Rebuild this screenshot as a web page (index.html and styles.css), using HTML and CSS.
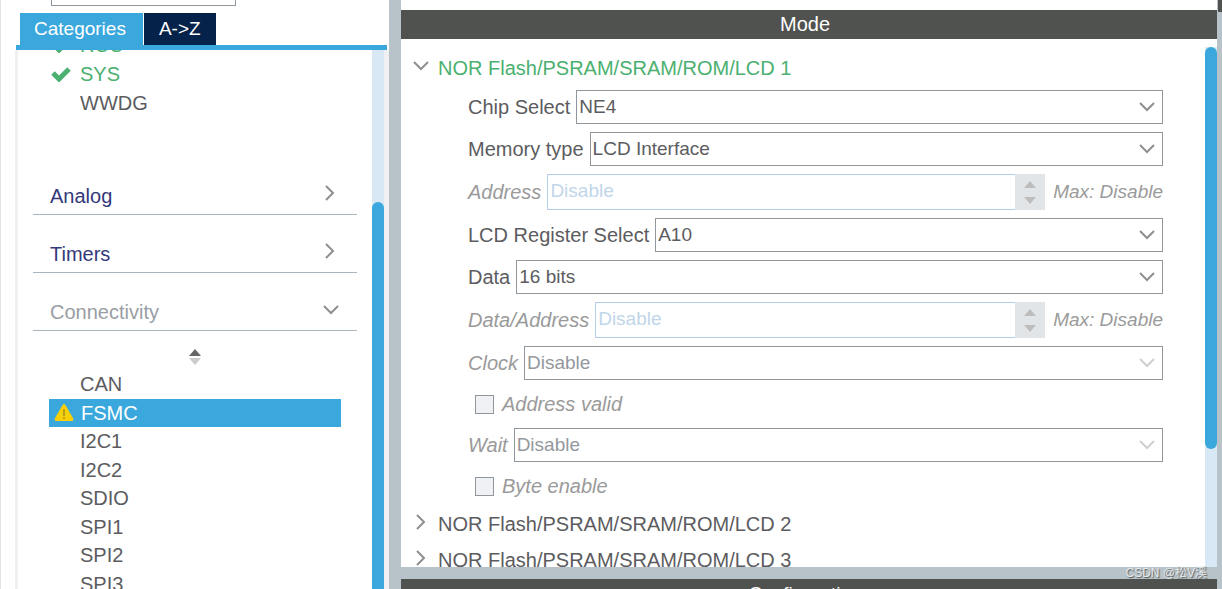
FILE: index.html
```html
<!DOCTYPE html>
<html lang="en">
<head>
<meta charset="utf-8">
<title>FSMC Mode and Configuration</title>
<link rel="stylesheet" href="styles.css">
</head>
<body>
<svg class="defs" aria-hidden="true">
  <symbol id="down" viewBox="0 0 16 10"><path d="M1 1 L8 8 L15 1" fill="none" stroke="currentColor" stroke-width="2"/></symbol>
  <symbol id="right" viewBox="0 0 10 16"><path d="M1 1 L8 8 L1 15" fill="none" stroke="currentColor" stroke-width="2"/></symbol>
  <symbol id="check" viewBox="0 0 20 16"><path d="M2 7 L8 13 L18 3" fill="none" stroke="currentColor" stroke-width="5"/></symbol>
  <symbol id="up-tri" viewBox="0 0 12 7"><path d="M6 0 L12 7 H0 Z" fill="currentColor"/></symbol>
  <symbol id="down-tri" viewBox="0 0 12 7"><path d="M6 7 L12 0 H0 Z" fill="currentColor"/></symbol>
</svg>
<div class="app">
  <aside class="sidebar">
    <input class="search" type="text" aria-label="Search">
    <div class="tabs" role="tablist">
      <button class="tab active" role="tab">Categories</button>
      <button class="tab" role="tab">A-&gt;Z</button>
    </div>
    <div class="tree">
      <div class="tree-content">
        <ul class="items system">
          <li class="item ok"><svg class="mark"><use href="#check"/></svg>RCC</li>
          <li class="item ok"><svg class="mark"><use href="#check"/></svg>SYS</li>
          <li class="item">WWDG</li>
        </ul>
        <button class="group">Analog<svg class="chev right"><use href="#right"/></svg></button>
        <button class="group">Timers<svg class="chev right"><use href="#right"/></svg></button>
        <button class="group open">Connectivity<svg class="chev"><use href="#down"/></svg></button>
        <button class="sort" aria-label="Sort"><svg class="tri dark"><use href="#up-tri"/></svg><svg class="tri"><use href="#down-tri"/></svg></button>
        <ul class="items connectivity">
          <li class="item">CAN</li>
          <li class="item selected"><svg class="warn" viewBox="0 0 20 17"><path d="M10 0 Q11 0 12 2 L19 14 Q20 17 18 17 H2 Q0 17 1 14 L8 2 Q9 0 10 0 Z" fill="#f8d007"/><path d="M10 5 V12 M10 13 V15" stroke="#a49222" stroke-width="1.5"/></svg>FSMC</li>
          <li class="item">I2C1</li>
          <li class="item">I2C2</li>
          <li class="item">SDIO</li>
          <li class="item">SPI1</li>
          <li class="item">SPI2</li>
          <li class="item">SPI3</li>
        </ul>
      </div>
      <div class="track"><div class="thumb"></div></div>
    </div>
  </aside>
  <main class="main">
    <h2 class="bar">Mode</h2>
    <section class="panel">
      <div class="panel-content">
        <button class="head on"><svg class="chev"><use href="#down"/></svg>NOR Flash/PSRAM/SRAM/ROM/LCD 1</button>
        <div class="form">
          <div class="row"><label for="cs">Chip Select</label><span class="pick"><select id="cs"><option>NE4</option></select><svg class="chev"><use href="#down"/></svg></span></div>
          <div class="row"><label for="mt">Memory type</label><span class="pick"><select id="mt"><option>LCD Interface</option></select><svg class="chev"><use href="#down"/></svg></span></div>
          <div class="row off"><label for="ad">Address</label><span class="spin"><input id="ad" type="text" value="Disable" disabled><span class="steps"><button disabled aria-label="Increase address"><svg class="tri"><use href="#up-tri"/></svg></button><button disabled aria-label="Decrease address"><svg class="tri"><use href="#down-tri"/></svg></button></span></span><span class="max">Max: Disable</span></div>
          <div class="row"><label for="rs">LCD Register Select</label><span class="pick"><select id="rs"><option>A10</option></select><svg class="chev"><use href="#down"/></svg></span></div>
          <div class="row"><label for="da">Data</label><span class="pick"><select id="da"><option>16 bits</option></select><svg class="chev"><use href="#down"/></svg></span></div>
          <div class="row off"><label for="dd">Data/Address</label><span class="spin"><input id="dd" type="text" value="Disable" disabled><span class="steps"><button disabled aria-label="Increase data/address"><svg class="tri"><use href="#up-tri"/></svg></button><button disabled aria-label="Decrease data/address"><svg class="tri"><use href="#down-tri"/></svg></button></span></span><span class="max">Max: Disable</span></div>
          <div class="row off"><label for="ck">Clock</label><span class="pick"><select id="ck" disabled><option>Disable</option></select><svg class="chev"><use href="#down"/></svg></span></div>
          <div class="row off tick"><input id="av" type="checkbox" disabled><label for="av">Address valid</label></div>
          <div class="row off"><label for="wt">Wait</label><span class="pick"><select id="wt" disabled><option>Disable</option></select><svg class="chev"><use href="#down"/></svg></span></div>
          <div class="row off tick"><input id="be" type="checkbox" disabled><label for="be">Byte enable</label></div>
        </div>
        <button class="head"><svg class="chev right"><use href="#right"/></svg>NOR Flash/PSRAM/SRAM/ROM/LCD 2</button>
        <button class="head"><svg class="chev right"><use href="#right"/></svg>NOR Flash/PSRAM/SRAM/ROM/LCD 3</button>
      </div>
      <div class="track"><div class="thumb"></div></div>
    </section>
    <h2 class="bar config">Configuration</h2>
  </main>
  <div class="edge"></div>
  <div class="watermark">CSDN @松V溪</div>
</div>
</body>
</html>
```

FILE: styles.css
```css
* { box-sizing: border-box; }
body { margin: 0; }
button, input, select { font: inherit; color: inherit; margin: 0; padding: 0; border: 0; border-radius: 0; background: none; }
.defs { display: none; }

.app {
  position: relative;
  display: flex;
  height: 100vh;
  overflow: hidden;
  background: #b8c3c9;
  font-family: "Liberation Sans", Arial, "Noto Sans CJK SC", sans-serif;
  font-size: 20px;
  line-height: 28px;
  color: #5c5c60;
}

.sidebar {
  display: flex;
  flex-direction: column;
  flex: 0 0 389px;
  margin-right: 12px;
  background: #fff;
  border-left: 1px solid #e4e4e4;
}
.search { width: 185px; height: 6px; margin-left: 50px; border: 1px solid #8f969c; border-top: 0; }
.tabs { display: flex; gap: 1px; margin: 7px 2px 0 15px; padding-left: 4px; border-bottom: 5px solid #3aa8dc; font-size: 19px; }
.tab { height: 32px; padding: 0 15px; background: #05234a; color: #fff; }
.tab.active { padding: 0 17px 0 14px; background: #3aa8dc; }
.tree { display: flex; flex: 1; min-height: 0; margin-left: 14px; border-left: 3px solid #f0f0f0; border-right: 5px solid #f0f0f2; overflow: hidden; }
.tree-content { flex: 1; padding: 0 15px; }
.items { display: grid; grid-auto-rows: 1fr; margin: 0 16px; padding: 0; list-style: none; }
.item { display: flex; align-items: center; padding-left: 31px; }
.system { height: 86px; margin-top: -19px; }
.connectivity { height: 228px; }
.ok { color: #4bb070; padding-left: 2px; gap: 9px; }
.mark { width: 20px; height: 16px; }
.selected { gap: 7px; padding-left: 5px; background: #3aa8dc; color: #fff; }
.warn { width: 20px; height: 17px; }
.group {
  display: flex;
  align-items: flex-end;
  justify-content: space-between;
  width: 100%;
  height: 58px;
  padding: 0 18px 4px 17px;
  border-bottom: 1px solid #a9b6bd;
  color: #33397a;
}
.system + .group { margin-top: 40px; }
.group.open { color: #999da5; }
.chev { width: 16px; height: 10px; color: #8f8f8f; flex: none; }
.chev.right { width: 10px; height: 16px; }
.group .chev { margin-bottom: 11px; }
.group .chev.right { margin: 0 4px 9px 0; }
.sort { display: flex; flex-direction: column; align-items: center; gap: 2px; width: 100%; padding: 18px 0 5px; }
.tri { display: block; width: 12px; height: 7px; color: #cbcbcb; }
.tri.dark { color: #666; }

.track { flex: 0 0 12px; background: #d9e8f5; }
.thumb { background: #3aa8dc; border-radius: 6px; }
.tree .thumb { height: 500px; margin-top: 152px; }

.main { flex: 1; display: flex; flex-direction: column; min-width: 0; border-top: 10px solid #fff; }
.bar { flex: none; height: 29px; margin: 0; padding-right: 8px; background: #50524f; color: #fff; font-size: 20px; font-weight: 400; text-align: center; }
.config { height: 10px; margin-top: 12px; font-size: 19px; line-height: 30px; overflow: hidden; }
.panel { flex: 1; display: flex; min-height: 0; background: #fff; overflow: hidden; }
.panel-content { flex: 1; min-width: 0; padding: 11px 42px 0 12px; }
.head { display: flex; align-items: center; gap: 9px; width: 100%; height: 36px; text-align: left; }
.head .chev { margin: 0 0 4px; }
.head .chev.right { margin: 0 3px 4px; }
.head.on { color: #4bb070; }
.form { display: flex; flex-direction: column; gap: 8px; margin: 4px 0 4px 55px; }
.row { display: flex; align-items: center; gap: 6px; }
.row label, .max { flex: none; }
.pick { position: relative; flex: 1; display: flex; }
.pick select { appearance: none; width: 100%; height: 34px; padding-left: 2px; border: 1px solid #8f969c; background: #fff; font-size: 19px; opacity: 1; }
.pick .chev { position: absolute; right: 8px; top: 12px; pointer-events: none; }
.off { color: #9a9a9a; }
.off label, .max { font-style: italic; }
.off .chev { color: #cfcfcf; }
.pick select:disabled { color: #94989d; }
.max { margin-left: 2px; font-size: 19px; }
.spin { flex: 1; display: flex; height: 36px; }
.spin input { flex: 1; min-width: 0; padding: 0 0 3px 2px; border: 1px solid #b4cfe8; border-right: 0; color: #bfd6ea; font-size: 19px; }
.steps { display: flex; flex-direction: column; justify-content: center; align-items: center; gap: 9px; width: 30px; background: #e2e5e7; }
.steps button { display: block; }
.steps .tri { color: #bdbdbd; }
.tick { height: 32px; padding-left: 7px; gap: 8px; }
.tick input { appearance: none; width: 19px; height: 19px; border: 1px solid #8f969c; background: #f0f1f4; }
.panel .track { padding-top: 8px; background: linear-gradient(#fff 8px, #d9e8f5 8px); }
.panel .thumb { height: 402px; }
.edge { flex: 0 0 5px; align-self: flex-start; height: 12px; border-left: 1px solid #b8c3c9; background: #50524f; }
.watermark { position: absolute; right: 15px; bottom: 6px; font-size: 12px; line-height: 20px; color: #e4e8ea; text-shadow: 1px 1px 1px #555; }
```
